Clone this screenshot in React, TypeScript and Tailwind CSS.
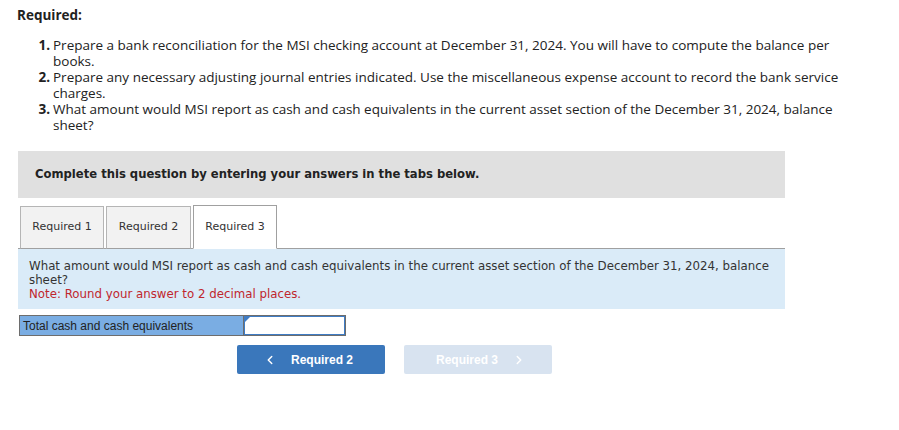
import { ChevronLeft, ChevronRight } from 'lucide-react';

const items = [
  'Prepare a bank reconciliation for the MSI checking account at December 31, 2024. You will have to compute the balance per books.',
  'Prepare any necessary adjusting journal entries indicated. Use the miscellaneous expense account to record the bank service charges.',
  'What amount would MSI report as cash and cash equivalents in the current asset section of the December 31, 2024, balance sheet?',
];

export default function App() {
  return (
    <div className="min-h-[430px] w-[899px] bg-white text-[#222]">
      <div className="px-[17px] pt-[6px] font-['Open_Sans','Lato',sans-serif] text-[13.5px]">
        <p className="font-bold leading-[18px]">Required:</p>
        <ol className="mt-[14px] ml-[19px] flex flex-col gap-[1px]">
          {items.map((t, i) => (
            <li key={i} className="flex leading-[15.5px]">
              <span className="w-[16px] shrink-0 text-right pr-[2px] font-bold">{i + 1}.</span>
              <span className="pl-[1px] w-[800px]">{t}</span>
            </li>
          ))}
        </ol>
      </div>

      <div className="ml-[18px] w-[767px] font-['DejaVu_Sans','Verdana',sans-serif]">
        <div className="mt-[18px] h-[47px] bg-[#e0e0e0] flex items-center pl-[17px] text-[11.6px] font-bold text-[#222]">
          Complete this question by entering your answers in the tabs below.
        </div>

        <div className="mt-[7px] flex items-end h-[44px] border-b border-[#a0a0a0]">
          <div className="ml-[2px] w-[84px] h-[43px] -mb-px border border-[#b5b5b5] border-b-[#a0a0a0] bg-[#f2f2f2] flex items-center justify-center text-[11px] text-[#333]">
            Required 1
          </div>
          <div className="ml-[2px] w-[85px] h-[43px] -mb-px border border-[#b5b5b5] border-b-[#a0a0a0] bg-[#f2f2f2] flex items-center justify-center text-[11px] text-[#333]">
            Required 2
          </div>
          <div className="ml-[2px] w-[84px] h-[44px] -mb-px border border-[#a0a0a0] border-b-white bg-white flex items-center justify-center text-[11px] text-[#333]">
            Required 3
          </div>
        </div>

        <div className="bg-[#daebf8] pl-[11px] pr-[10px] pt-[10px] pb-[8px] text-[11.8px] leading-[14px] text-[#333]">
          <p>
            What amount would MSI report as cash and cash equivalents in the current asset section of the December 31, 2024, balance sheet?
          </p>
          <p className="text-[#c0262d]">Note: Round your answer to 2 decimal places.</p>
        </div>
      </div>

      <div className="ml-[19px] mt-[6px] flex h-[21px] font-['Liberation_Sans','Arial',sans-serif]">
        <div className="w-[225px] bg-[#7aade3] border border-[#6d6d6d] flex items-center pl-[3px] text-[12px] text-[#222]">
          Total cash and cash equivalents
        </div>
        <div className="relative w-[102px] border border-[#6d6d6d] border-l-0 bg-white">
          <div className="absolute inset-0 border border-[#3f7cc4]" />
          <svg className="absolute left-[1px] top-[1px]" width="5" height="5" viewBox="0 0 5 5">
            <polygon points="0,0 5,0 0,5" fill="#3f7cc4" />
          </svg>
        </div>
      </div>

      <div className="ml-[237px] mt-[9px] flex gap-[19px] font-['Liberation_Sans','Arial',sans-serif]">
        <button className="w-[148px] h-[29px] rounded-[2px] bg-[#3a77bb] text-white text-[12px] font-bold flex items-center justify-center gap-[14px]">
          <ChevronLeft size={14} strokeWidth={2.5} />
          <span className="pr-[6px]">Required 2</span>
        </button>
        <button className="w-[148px] h-[29px] rounded-[2px] bg-[#d8e3f0] text-white text-[12px] font-bold flex items-center justify-center gap-[14px]">
          <span className="pl-[6px]">Required 3</span>
          <ChevronRight size={14} strokeWidth={2.5} />
        </button>
      </div>
    </div>
  );
}
